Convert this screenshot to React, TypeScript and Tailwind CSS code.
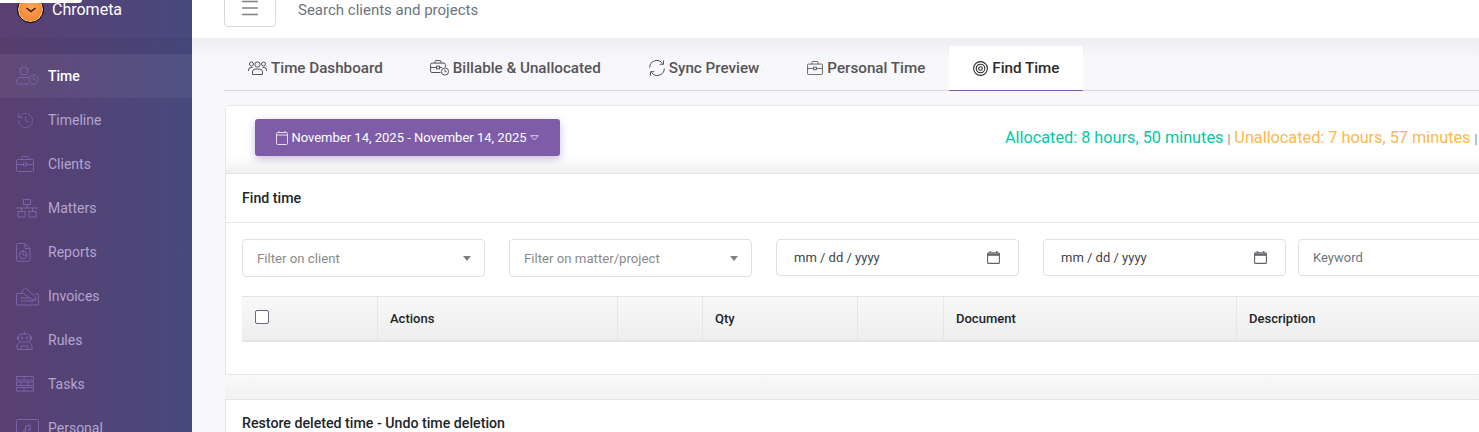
import { History, Menu } from "lucide-react";

const UserClockIcon = () => (
  <svg width="23" height="20" viewBox="0 0 23 20" fill="none" stroke="currentColor" strokeWidth="1">
    <circle cx="8" cy="5" r="4" />
    <path d="M13 11.5 H4 a3.5 3.5 0 0 0 -3.5 3.5 v2 a1 1 0 0 0 1 1 H13" />
    <circle cx="17.5" cy="13.5" r="4.5" />
    <path d="M17.5 11 v2.7 h2" />
  </svg>
);

const BriefcaseIcon = ({ w, h }: { w: number; h: number }) => (
  <svg width={w} height={h} viewBox="0 0 18 16" fill="none" stroke="currentColor" strokeWidth="1">
    <rect x=".5" y="3.5" width="17" height="12" rx="1" />
    <path d="M5.5 3.5 V1.5 a1 1 0 0 1 1 -1 H11.5 a1 1 0 0 1 1 1 V3.5" />
    <path d="M.5 8.5 H7.5 M10.5 8.5 H17.5" />
    <rect x="7.5" y="7" width="3" height="3" />
  </svg>
);

const MattersIcon = () => (
  <svg width="22" height="19" viewBox="0 0 22 19" fill="none" stroke="currentColor" strokeWidth="1">
    <rect x="7.5" y=".5" width="7" height="5" />
    <path d="M11 5.5 V9 M0 9 H22 M5.5 9 V12.5 M16.5 9 V12.5" />
    <rect x="2" y="12.5" width="7" height="5.5" />
    <rect x="13" y="12.5" width="7" height="5.5" />
  </svg>
);

const ReportIcon = () => (
  <svg width="15" height="19" viewBox="0 0 15 19" fill="none" stroke="currentColor" strokeWidth="1">
    <path d="M1.5.5 H9 l5 5 V17 a1.3 1.3 0 0 1 -1.3 1.3 H1.8 A1.3 1.3 0 0 1 .5 17 V1.5 a1 1 0 0 1 1 -1 Z" />
    <path d="M9 .5 V5.5 H14" />
    <circle cx="7" cy="12" r="3.8" />
    <path d="M7 12 V7 M7 12 h4.5" />
  </svg>
);

const InvoiceIcon = () => (
  <svg width="23" height="19" viewBox="0 0 23 19" fill="none" stroke="currentColor" strokeWidth="1">
    <path d="M6 6.5 H.5 V18 H22.5 V7 H19" />
    <path d="M5 5 L9.5 .8 L19 9.5 L20 13 L16 12.5 Z" />
    <path d="M5 11 H13 M5 14 H18" />
  </svg>
);

const BotIcon = () => (
  <svg width="17" height="19" viewBox="0 0 17 19" fill="none" stroke="currentColor" strokeWidth="1">
    <path d="M8.5 .5 V3" />
    <rect x="2.5" y="3" width="12" height="8" rx="3" />
    <circle cx="6" cy="7" r="1" />
    <circle cx="11" cy="7" r="1" />
    <path d="M1.5 5.5 v3 M15.5 5.5 v3 M3.5 11.5 L1 14 V18.5 H16 V14 L13.5 11.5" />
    <path d="M5 18.5 V15 H12 V18.5" />
  </svg>
);

const TasksIcon = () => (
  <svg width="18" height="16" viewBox="0 0 18 16" fill="none" stroke="currentColor" strokeWidth="1">
    <rect x=".5" y=".5" width="17" height="3.6" />
    <rect x=".5" y="6" width="17" height="3.6" />
    <rect x=".5" y="11.5" width="17" height="3.6" />
    <path d="M8 .5 v3.6 M5 6 v3.6 M12 6 v3.6 M8 11.5 v3.6" />
  </svg>
);

const PersonalIcon = () => (
  <svg width="23" height="19" viewBox="0 0 23 19" fill="none" stroke="currentColor" strokeWidth="1">
    <rect x=".5" y=".5" width="22" height="18" rx="1" />
    <path d="M9.5 12 V7 L14 6 V11" />
    <circle cx="8.5" cy="12" r="1" />
    <circle cx="13" cy="11" r="1" />
  </svg>
);

const TeamIcon = () => (
  <svg width="19" height="14" viewBox="0 0 19 14" fill="none" stroke="currentColor" strokeWidth="1">
    <circle cx="3.5" cy="3" r="2" />
    <circle cx="9.5" cy="3.5" r="2.6" />
    <circle cx="15.5" cy="3" r="2" />
    <path d="M.5 10 V9 a2.5 2.5 0 0 1 2.5 -2.5 H4.5 M18.5 10 V9 a2.5 2.5 0 0 0 -2.5 -2.5 H14.5" />
    <path d="M4.5 13.5 V11 a3 3 0 0 1 3 -3 H11.5 a3 3 0 0 1 3 3 V13.5 Z" />
  </svg>
);

const BriefcaseClockIcon = () => (
  <svg width="19" height="16" viewBox="0 0 19 16" fill="none" stroke="currentColor" strokeWidth="1" className="-ml-[1px]">
    <path d="M10.5 12.5 H2 a1.4 1.4 0 0 1 -1.4 -1.4 V4.5 A1.4 1.4 0 0 1 2 3.1 H14 a1.4 1.4 0 0 1 1.4 1.4 V7" />
    <path d="M5 3 V1.6 A1 1 0 0 1 6 .6 H10 a1 1 0 0 1 1 1 V3" />
    <path d="M.6 7.5 H6.5 M9.5 7.5 H12" />
    <rect x="6.5" y="6.2" width="3" height="2.6" />
    <circle cx="15" cy="11.5" r="3.6" />
    <path d="M15 9.5 v2.2 h1.6" />
  </svg>
);

const SyncIcon = () => (
  <svg width="16" height="16" viewBox="0 0 16 16" fill="none" stroke="currentColor" strokeWidth="1">
    <path d="M.7 7.5 A7 7 0 0 1 13.5 3.6" />
    <path d="M14.5 .5 V4.3 H10.7" />
    <path d="M15.3 8.5 A7 7 0 0 1 2.5 12.4" />
    <path d="M1.5 15.5 V11.7 H5.3" />
  </svg>
);

const TargetIcon = () => (
  <svg width="15" height="15" viewBox="0 0 15 15" fill="none" stroke="currentColor" strokeWidth="1.1">
    <circle cx="7.5" cy="7.5" r="6.9" />
    <circle cx="7.5" cy="7.5" r="4.3" />
    <circle cx="7.5" cy="7.5" r="1.8" />
  </svg>
);

const DateIcon = () => (
  <svg width="13" height="13" viewBox="0 0 13 13" fill="none" stroke="currentColor">
    <rect x=".6" y="1.8" width="11.8" height="10.6" rx="1" strokeWidth="1.1" />
    <path d="M.6 3.6 H12.4" strokeWidth="2.4" />
    <path d="M3.3 0 V2 M9.7 0 V2" strokeWidth="1.2" />
  </svg>
);

const navItems = [
  { name: "Time", icon: <UserClockIcon /> },
  { name: "Timeline", icon: <History size={19} strokeWidth={1} /> },
  { name: "Clients", icon: <BriefcaseIcon w={18} h={16} /> },
  { name: "Matters", icon: <MattersIcon /> },
  { name: "Reports", icon: <ReportIcon /> },
  { name: "Invoices", icon: <InvoiceIcon /> },
  { name: "Rules", icon: <BotIcon /> },
  { name: "Tasks", icon: <TasksIcon /> },
  { name: "Personal", icon: <PersonalIcon /> },
];

const tabs = [
  { name: "Time Dashboard", icon: <TeamIcon /> },
  { name: "Billable & Unallocated", icon: <BriefcaseClockIcon /> },
  { name: "Sync Preview", icon: <SyncIcon /> },
  { name: "Personal Time", icon: <BriefcaseIcon w={16} h={14} /> },
];

const columns = ["Actions", "", "Qty", "", "Document", "Description"];

const SelectBox = ({ label }: { label: string }) => (
  <div className="flex h-[38px] w-[243px] items-center justify-between rounded border border-[#e0e0e0] pl-[14px] pr-[13px] text-[13.2px] text-[#8a8a8a]">
    <span className="pt-[1px]">{label}</span>
    <span className="h-0 w-0 border-x-[4px] border-t-[5px] border-x-transparent border-t-[#808080]" />
  </div>
);

const DateBox = () => (
  <div className="flex h-[37px] w-[243px] items-center justify-between rounded border border-[#e0e0e0] pl-[17px] pr-[18px] text-[13px] text-[#3f444a]">
    <span>mm / dd / yyyy</span>
    <span className="text-[#5f6368]">
      <DateIcon />
    </span>
  </div>
);

export default function App() {
  return (
    <div className="flex h-[432px] w-[1479px] overflow-hidden bg-[#f8f7fa] font-['Roboto',sans-serif]">
      {/* Sidebar */}
      <aside className="relative h-full w-[192px] shrink-0 bg-gradient-to-r from-[#5a3f72] to-[#47497d]">
        <div className="absolute left-0 top-0 h-[3px] w-[82px] rounded-br bg-white" />
        <div className="flex h-[38px] items-start gap-[9px] pl-[17px]">
          <div className="-mt-[4px] flex h-[27px] w-[27px] items-center justify-center rounded-full border-[1.5px] border-black bg-[radial-gradient(circle_at_50%_40%,#ffa352,#ee7d2a)] shadow-[inset_0_0_0_1px_rgba(255,255,255,0.55)]">
            <svg width="12" height="8" viewBox="0 0 12 8" fill="none" stroke="#2a1a10" strokeWidth="1.5">
              <path d="M1.5 2 L6 5.5 L10.5 2" />
            </svg>
          </div>
          <span className="-ml-[1px] text-base leading-[19px] text-white">Chrometa</span>
        </div>
        <div className="h-[16px] bg-black/[0.03]" />
        <nav>
          {navItems.map((item, i) => (
            <div
              key={item.name}
              className={`flex h-[44px] items-center text-sm ${i === 0 ? "bg-white/5 font-medium text-white" : "text-[#b3a5cf]"}`}
            >
              <span className="flex w-[48px] justify-start pl-[16px] text-[#7a62a6]">{item.icon}</span>
              <span>{item.name}</span>
            </div>
          ))}
        </nav>
      </aside>

      {/* Main */}
      <main className="min-w-0 flex-1 overflow-hidden">
        <header className="flex h-[38px] items-start bg-white pl-[32px]">
          <div className="-mt-[1px] flex h-[28px] w-[52px] items-center justify-center rounded-b border border-[#d8d8d8]">
            <Menu size={22} strokeWidth={1.6} className="-mt-[10px] text-[#808080]" />
          </div>
          <span className="ml-[22px] text-[15px] leading-[20px] text-[#6c757d]">Search clients and projects</span>
        </header>

        <div className="bg-gradient-to-b from-[#eeedf2] to-[#f8f7fb] to-[22px] pl-[32px] pt-[8px]">
          <div className="flex h-[45px] border-b border-[#d8d6de]">
            {tabs.map((tab) => (
              <div key={tab.name} className="flex items-center gap-[4px] px-6 text-[15.2px] font-medium text-[#555]">
                {tab.icon}
                <span>{tab.name}</span>
              </div>
            ))}
            <div className="-mb-px flex items-center gap-[4px] border-b border-[#7e57b2] bg-white px-6 text-[15.2px] font-medium text-[#2b2b2b]">
              <TargetIcon />
              <span>Find Time</span>
            </div>
          </div>
        </div>

        <div className="pl-[33px] pt-[14px]">
          <section className="w-[1400px] rounded-t border-l border-t border-[#e8e8ec] bg-white">
            <div className="flex h-[67px] items-start bg-gradient-to-b from-white from-[50px] to-[#f0f0f0] pt-[13px]">
              <div className="ml-[29px] flex h-[37px] w-[305px] items-center justify-center rounded-[3px] bg-[#7e5ca8] text-[13px] text-white shadow-[0_3px_8px_rgba(126,92,168,0.4)]">
                <span className="mr-[3px] opacity-80">
                  <svg width="12" height="14" viewBox="0 0 12 14" fill="none" stroke="currentColor" strokeWidth="1">
                    <rect x=".5" y="1.5" width="11" height="12" rx="1" />
                    <path d="M.5 4 H11.5 M3 0 V2 M9 0 V2" />
                  </svg>
                </span>
                <span>November 14, 2025 - November 14, 2025</span>
                <svg width="9" height="6" viewBox="0 0 9 6" fill="none" stroke="currentColor" strokeWidth="1" className="ml-[3px] opacity-70">
                  <path d="M.7 .7 H8.3 L4.5 5 Z" />
                </svg>
              </div>
              <div className="ml-[445px] flex h-[39px] items-center whitespace-nowrap text-[16.25px]">
                <span className="text-[#00c9a7]">Allocated: 8 hours, 50 minutes</span>
                <span className="mx-[4px] text-xs text-[#808080]">|</span>
                <span className="text-[#ffb848]">Unallocated: 7 hours, 57 minutes</span>
                <span className="mx-[4px] text-xs text-[#808080]">|</span>
              </div>
            </div>

            <div className="-ml-px h-[202px] rounded-b border-y border-l border-[#e4e4e4]">
              <div className="flex h-[49px] items-center border-b border-[#e8e8e8] pl-[16px] pt-[1px] text-[14.2px] font-medium text-[#212529]">Find time</div>
              <div className="flex items-start pl-[16px] pt-[16px]">
                <div className="flex gap-6">
                  <SelectBox label="Filter on client" />
                  <SelectBox label="Filter on matter/project" />
                  <DateBox />
                  <DateBox />
                </div>
                <div className="ml-[12px] flex h-[37px] w-[300px] items-center rounded border border-[#e0e0e0] pl-[14px] text-[13px] text-[#6c757d]">Keyword</div>
              </div>
              <div className="ml-[16px] mt-[19px] grid h-[46px] grid-cols-[135px_240px_85px_155px_86px_293px_1fr] border-y border-b-2 border-[#e4e4e4] bg-gradient-to-b from-[#f8f8f8] to-[#eeeeee] text-[13px] font-medium text-[#212529]">
                <div className="flex items-center pb-[4px] pl-[13px]">
                  <span className="h-[14px] w-[14px] rounded-[2px] border border-[#6b6780] bg-white" />
                </div>
                {columns.map((col, i) => (
                  <div key={i} className="flex items-center border-l border-[#e6e6e6] pl-[12px]">{col}</div>
                ))}
              </div>
            </div>

            <div className="-ml-px h-[24px] bg-gradient-to-b from-[#f9f9f9] to-[#f2f2f2]" />

            <div className="-ml-px border-l border-t border-[#e4e4e4] bg-white pl-[16px] pt-[14px] text-[14.2px] font-medium leading-[18px] text-[#212529]">
              Restore deleted time - Undo time deletion
            </div>
          </section>
        </div>
      </main>
    </div>
  );
}
